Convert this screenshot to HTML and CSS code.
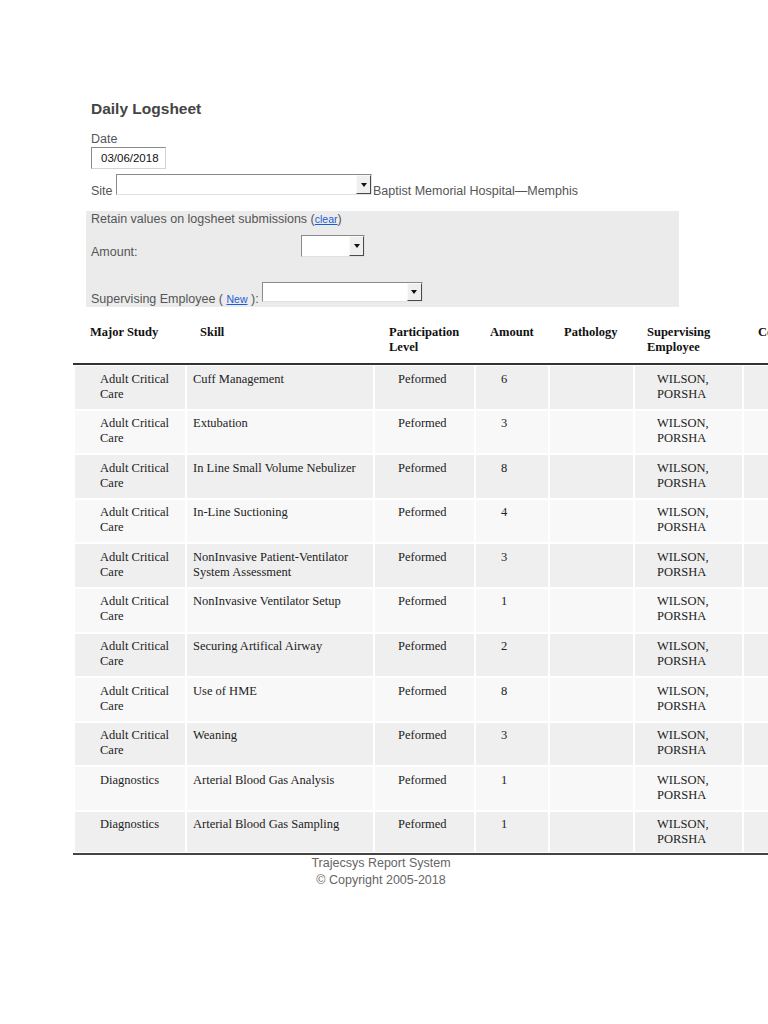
FILE: index.html
```html
<!DOCTYPE html>
<html lang="en">
<head>
    <meta charset="UTF-8">
    <meta name="viewport" content="width=device-width, initial-scale=1.0">
    <title>Daily Logsheet | Trajecsys</title>
    <link rel="stylesheet" href="styles.css">
</head>
<body>
    <div class="page">
        <h1>Daily Logsheet</h1>

        <div class="field-label">Date</div>
        <input class="date-input" type="text" value="03/06/2018">

        <div class="site-row">
            <span class="inline-label">Site</span>
            <span class="select site-select"><span class="select-btn"><span class="arrow"></span></span></span>
            <span class="site-name">Baptist Memorial Hospital&mdash;Memphis</span>
        </div>

        <div class="retain-panel">
            <div class="retain-title">Retain values on logsheet submissions (<a href="#">clear</a>)</div>
            <div class="retain-row">
                <span class="retain-label amount-label">Amount:</span>
                <span class="select amount-select"><span class="select-btn"><span class="arrow"></span></span></span>
            </div>
            <div class="retain-row supervisor-row">
                <span class="retain-label">Supervising Employee ( <a href="#">New</a> ):</span>
                <span class="select employee-select"><span class="select-btn"><span class="arrow"></span></span></span>
            </div>
        </div>

        <table class="log-table">
            <colgroup>
                <col style="width:112px">
                <col style="width:188px">
                <col style="width:101px">
                <col style="width:74px">
                <col style="width:85px">
                <col style="width:109px">
                <col style="width:120px">
            </colgroup>
            <thead>
                <tr>
                    <th>Major Study</th>
                    <th>Skill</th>
                    <th>Participation Level</th>
                    <th>Amount</th>
                    <th>Pathology</th>
                    <th>Supervising Employee</th>
                    <th>Comments</th>
                </tr>
            </thead>
            <tbody id="logRows"></tbody>
        </table>
    </div>

    <div class="footer">
        Trajecsys Report System<br>
        &copy; Copyright 2005-2018
    </div>

    <script>
        const entries = [
            ['Adult Critical Care', 'Cuff Management', 6],
            ['Adult Critical Care', 'Extubation', 3],
            ['Adult Critical Care', 'In Line Small Volume Nebulizer', 8],
            ['Adult Critical Care', 'In-Line Suctioning', 4],
            ['Adult Critical Care', 'NonInvasive Patient-Ventilator System Assessment', 3],
            ['Adult Critical Care', 'NonInvasive Ventilator Setup', 1],
            ['Adult Critical Care', 'Securing Artifical Airway', 2],
            ['Adult Critical Care', 'Use of HME', 8],
            ['Adult Critical Care', 'Weaning', 3],
            ['Diagnostics', 'Arterial Blood Gas Analysis', 1],
            ['Diagnostics', 'Arterial Blood Gas Sampling', 1]
        ];

        const tbody = document.getElementById('logRows');
        entries.forEach(function(entry) {
            const row = document.createElement('tr');
            row.innerHTML =
                '<td class="c-study">' + entry[0] + '</td>' +
                '<td class="c-skill">' + entry[1] + '</td>' +
                '<td class="c-level">Peformed</td>' +
                '<td class="c-amount">' + entry[2] + '</td>' +
                '<td class="c-path"></td>' +
                '<td class="c-emp">WILSON, PORSHA</td>' +
                '<td class="c-comment"></td>';
            tbody.appendChild(row);
        });
    </script>
</body>
</html>
```

FILE: styles.css
```css
body {
    margin: 0;
    font-family: "Liberation Sans", Arial, sans-serif;
    font-size: 12.5px;
    color: #555;
    background: #fff;
    overflow-x: hidden;
}
.page {
    padding-left: 91px;
    padding-top: 99px;
}
h1 {
    margin: 0;
    font-size: 15.5px;
    line-height: 20px;
    color: #444;
}
a {
    color: #1a5dd6;
    font-size: 10.5px;
}
.field-label {
    margin-top: 13px;
    line-height: 15px;
}
.date-input {
    display: block;
    box-sizing: border-box;
    width: 75px;
    height: 22px;
    margin: 0;
    padding: 0 0 0 9px;
    border: 1px solid;
    border-color: #8a8a8a #d4d4d4 #d4d4d4 #8a8a8a;
    font-family: "Liberation Sans", Arial, sans-serif;
    font-size: 11.5px;
    color: #111;
}
.site-row {
    display: flex;
    align-items: flex-end;
    margin-top: 5px;
}
.inline-label,
.site-name,
.retain-label {
    line-height: 15px;
    margin-bottom: -4px;
}
.inline-label {
    width: 25px;
}
.select {
    box-sizing: border-box;
    display: inline-flex;
    justify-content: flex-end;
    background: #fff;
    border: 1px solid;
    border-color: #8a8a8a #e2e2e2 #e2e2e2 #8a8a8a;
}
.select-btn {
    box-sizing: border-box;
    width: 15px;
    display: flex;
    align-items: center;
    justify-content: center;
    background: #efefef;
    border: 1px solid;
    border-color: #fafafa #4a4a4a #4a4a4a #fafafa;
}
.arrow {
    width: 0;
    height: 0;
    border-left: 3.5px solid transparent;
    border-right: 3.5px solid transparent;
    border-top: 4px solid #111;
}
.site-select {
    width: 256px;
    height: 21px;
}
.site-name {
    margin-left: 1px;
}
.retain-panel {
    width: 593px;
    margin: 16px 0 0 -5px;
    padding: 1px 0 5px 5px;
    box-sizing: border-box;
    background: #ebebeb;
}
.retain-title {
    line-height: 15px;
}
.retain-row {
    display: flex;
    align-items: flex-end;
    margin-top: 8px;
}
.amount-label {
    width: 210px;
    margin-bottom: -3px;
}
.supervisor-row {
    margin-top: 25px;
}
.supervisor-row .retain-label {
    margin-right: 3px;
    margin-bottom: -5px;
}
.amount-select {
    width: 64px;
    height: 22px;
}
.employee-select {
    width: 161px;
    height: 20px;
}
.log-table {
    margin: 0 0 0 -18px;
    width: 789px;
    table-layout: fixed;
    border-collapse: separate;
    border-spacing: 0;
    border-bottom: 2px solid #444;
    font-family: "Liberation Serif", "Times New Roman", serif;
    font-size: 12.5px;
    line-height: 15px;
    color: #222;
}
.log-table th {
    text-align: left;
    vertical-align: top;
    font-weight: bold;
    color: #111;
    padding: 18px 6px 8px 16px;
    border-bottom: 2px solid #333;
}
.log-table th:first-child {
    padding-left: 17px;
}
.log-table th:nth-child(2) {
    padding-left: 15px;
}
.log-table th:nth-child(6) {
    padding-left: 14px;
}
.log-table td {
    vertical-align: top;
    padding: 5.5px 6px 7.1px 8px;
    border-left: 2px solid #fff;
    border-top: 1px solid #fff;
    border-bottom: 1px solid #fff;
    background: #efefef;
}
.log-table tbody tr:last-child td {
    padding-bottom: 5px;
}
.log-table tbody tr:nth-child(even) td {
    background: #f8f8f8;
}
.log-table td.c-study {
    padding-left: 25px;
}
.log-table td.c-skill {
    padding-left: 6px;
}
.log-table td.c-level {
    padding-left: 23px;
}
.log-table td.c-amount {
    padding-left: 25px;
}
.log-table td.c-emp {
    padding-left: 22px;
    padding-right: 20px;
}
.footer {
    text-align: center;
    line-height: 17px;
    color: #666;
    margin-right: 6px;
}
```
